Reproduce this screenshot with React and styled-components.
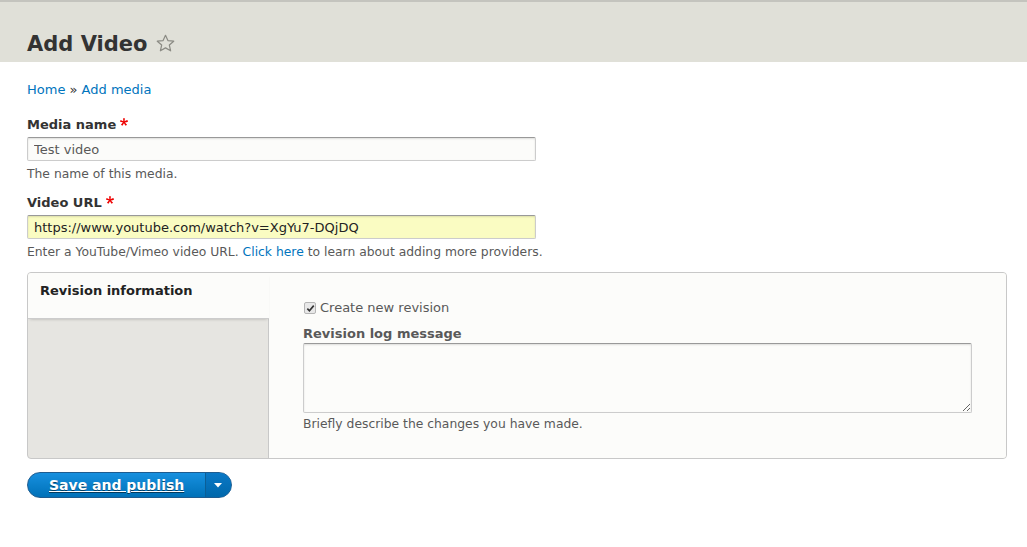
import React from "react";
import styled, { createGlobalStyle } from "styled-components";

const Global = createGlobalStyle`
  html, body { margin: 0; padding: 0; background: #fff; }
  body {
    font-family: "DejaVu Sans", "Lucida Grande", Verdana, sans-serif;
    font-size: 13px;
    color: #333;
  }
  * { box-sizing: border-box; }
`;

const Header = styled.header`
  height: 62px;
  background: #e0e0d8;
  border-top: 2px solid #c4c4be;
  padding: 30px 27px 0;
  display: flex;
  align-items: flex-start;
  gap: 8px;
`;

const Title = styled.h1`
  margin: 0;
  font-size: 21px;
  line-height: 24px;
  font-weight: 700;
  color: #333;
`;

const Star = styled.svg`
  width: 21px;
  height: 21px;
  margin-top: 1px;
`;

const Main = styled.main`
  padding: 0 20px 0 27px;
`;

const Breadcrumb = styled.nav`
  margin-top: 18px;
  line-height: 20px;
  font-size: 13px;
  color: #333;
`;

const Link = styled.a`
  color: #0074bd;
  text-decoration: none;
`;

const FormItem = styled.div`
  margin-top: ${(p) => p.$top || 0}px;
`;

const Label = styled.label`
  display: flex;
  align-items: flex-start;
  gap: 4px;
  font-weight: 700;
  font-size: 13px;
  line-height: 20px;
  color: #333;
  margin-bottom: 2px;
`;

const Req = styled.svg`
  width: 8px;
  height: 8px;
  margin-top: 3px;
`;

const TextInput = styled.input`
  display: block;
  width: 509px;
  height: 24px;
  padding: 2px 6px;
  font-family: inherit;
  font-size: 13px;
  color: ${(p) => (p.$filled ? "#222" : "#595959")};
  background: ${(p) => (p.$filled ? "#fafcc2" : "#fcfcfa")};
  border: 1px solid #ccc;
  border-top-color: #999;
  border-radius: 2px;
  box-shadow: inset 0 1px 2px rgba(0, 0, 0, 0.125);
  outline: none;
`;

const Description = styled.div`
  margin-top: 4px;
  font-size: 12.35px;
  line-height: 18px;
  color: #595959;
`;

const VerticalTabs = styled.div`
  margin-top: 11px;
  display: flex;
  border: 1px solid #c8c8c8;
  border-radius: 4px;
  background: #e6e5e1;
  overflow: hidden;
`;

const Menu = styled.ul`
  list-style: none;
  margin: 0;
  padding: 0;
  width: 240px;
  flex: none;
`;

const MenuItem = styled.li`
  position: relative;
  z-index: 1;
  margin-right: -1px;
  padding: 8px 12px 17px;
  line-height: 20px;
  font-weight: 700;
  font-size: 13px;
  color: #222;
  background: ${(p) => (p.$selected ? "#fcfcfa" : "transparent")};
  border-bottom: 1px solid #ccc;
  box-shadow: 0 2px 3px -2px rgba(0, 0, 0, 0.25);
`;

const Pane = styled.div`
  flex: 1;
  background: #fcfcfa;
  border-left: 1px solid #c8c8c8;
  padding: 25px 34px 25px;
`;

const CheckRow = styled.div`
  display: flex;
  align-items: center;
  gap: 4px;
  line-height: 20px;
  font-size: 13px;
  color: #595959;
`;

const CheckBox = styled.span`
  display: inline-flex;
  align-items: center;
  justify-content: center;
  width: 12px;
  height: 12px;
  margin-left: 1px;
  border: 1px solid #b5b5b5;
  border-radius: 2px;
  background: #e8e8e8;
`;

const PaneLabel = styled.label`
  display: block;
  margin-top: 7px;
  margin-bottom: 0;
  font-weight: 700;
  font-size: 13px;
  line-height: 18px;
  color: #595959;
`;

const TextArea = styled.textarea`
  display: block;
  width: 100%;
  height: 70px;
  resize: both;
  font-family: inherit;
  font-size: 13px;
  background: #fcfcfa;
  border: 1px solid #ccc;
  border-top-color: #999;
  border-radius: 2px;
  box-shadow: inset 0 1px 2px rgba(0, 0, 0, 0.125);
  outline: none;
`;

const PaneDescription = styled(Description)`
  margin-top: 2px;
`;

const DropButton = styled.div`
  margin-top: 13px;
  display: inline-flex;
  height: 26px;
  border: 1px solid #1e5c90;
  border-radius: 20em;
  overflow: hidden;
  background: linear-gradient(to bottom, #1790df, #0071b8);
`;

const MainAction = styled.button`
  border: 0;
  margin: 0;
  padding: 0 21px;
  background: transparent;
  font-family: inherit;
  font-size: 14px;
  font-weight: 700;
  color: #fff;
  text-decoration: underline;
  text-shadow: 0 1px rgba(0, 0, 0, 0.5);
  line-height: 24px;
  cursor: pointer;
`;

const Toggle = styled.button`
  border: 0;
  border-left: 1px solid #0b5f97;
  margin: 0;
  width: 26px;
  padding: 0 2px 0 0;
  background: linear-gradient(to bottom, #0a78c6, #0068ab);
  display: flex;
  align-items: center;
  justify-content: center;
  cursor: pointer;
`;

const REQ_PATH =
  "M0 7.562l1.114-3.438c2.565.906 4.43 1.688 5.59 2.35-.306-2.921-.467-4.93-.484-6.027h3.511c-.05 1.597-.234 3.6-.558 6.003 1.664-.838 3.566-1.613 5.714-2.325L16 7.562c-2.05.678-4.06 1.131-6.028 1.356.984.856 2.372 2.381 4.166 4.575l-2.906 2.059c-.935-1.274-2.041-3.009-3.316-5.206-1.194 2.275-2.244 4.013-3.147 5.206l-2.858-2.058c1.880-2.312 3.227-3.837 4.033-4.575C3.862 8.516 1.881 8.066 0 7.562";

const Required = () => (
  <Req viewBox="0 0 16 16">
    <path fill="#ee0000" d={REQ_PATH} />
  </Req>
);

export default function App() {
  return (
    <>
      <Global />
      <Header>
        <Title>Add Video</Title>
        <Star viewBox="0 0 24 24">
          <path
            d="M12 2.6l2.75 6.1 6.65.65-5 4.45 1.45 6.55L12 17l-5.85 3.35 1.45-6.55-5-4.45 6.65-.65z"
            fill="none"
            stroke="#8b8b84"
            strokeWidth="1.4"
            strokeLinejoin="round"
          />
        </Star>
      </Header>
      <Main>
        <Breadcrumb>
          <Link href="#">Home</Link> » <Link href="#">Add media</Link>
        </Breadcrumb>

        <FormItem $top={15}>
          <Label>
            Media name
            <Required />
          </Label>
          <TextInput defaultValue="Test video" />
          <Description>The name of this media.</Description>
        </FormItem>

        <FormItem $top={10}>
          <Label>
            Video URL
            <Required />
          </Label>
          <TextInput $filled defaultValue="https://www.youtube.com/watch?v=XgYu7-DQjDQ" />
          <Description>
            Enter a YouTube/Vimeo video URL. <Link href="#">Click here</Link> to learn about adding more providers.
          </Description>
        </FormItem>

        <VerticalTabs>
          <Menu>
            <MenuItem $selected>Revision information</MenuItem>
          </Menu>
          <Pane>
            <CheckRow>
              <CheckBox>
                <svg width="9" height="9" viewBox="0 0 10 10">
                  <path d="M1.5 5.2l2.3 2.4L8.6 1.8" fill="none" stroke="#333" strokeWidth="1.8" />
                </svg>
              </CheckBox>
              Create new revision
            </CheckRow>
            <PaneLabel>Revision log message</PaneLabel>
            <TextArea />
            <PaneDescription>Briefly describe the changes you have made.</PaneDescription>
          </Pane>
        </VerticalTabs>

        <DropButton>
          <MainAction>Save and publish</MainAction>
          <Toggle aria-label="List additional actions">
            <svg width="8" height="5" viewBox="0 0 8 5">
              <path d="M0 0h8L4 4.5z" fill="#fff" />
            </svg>
          </Toggle>
        </DropButton>
      </Main>
    </>
  );
}
